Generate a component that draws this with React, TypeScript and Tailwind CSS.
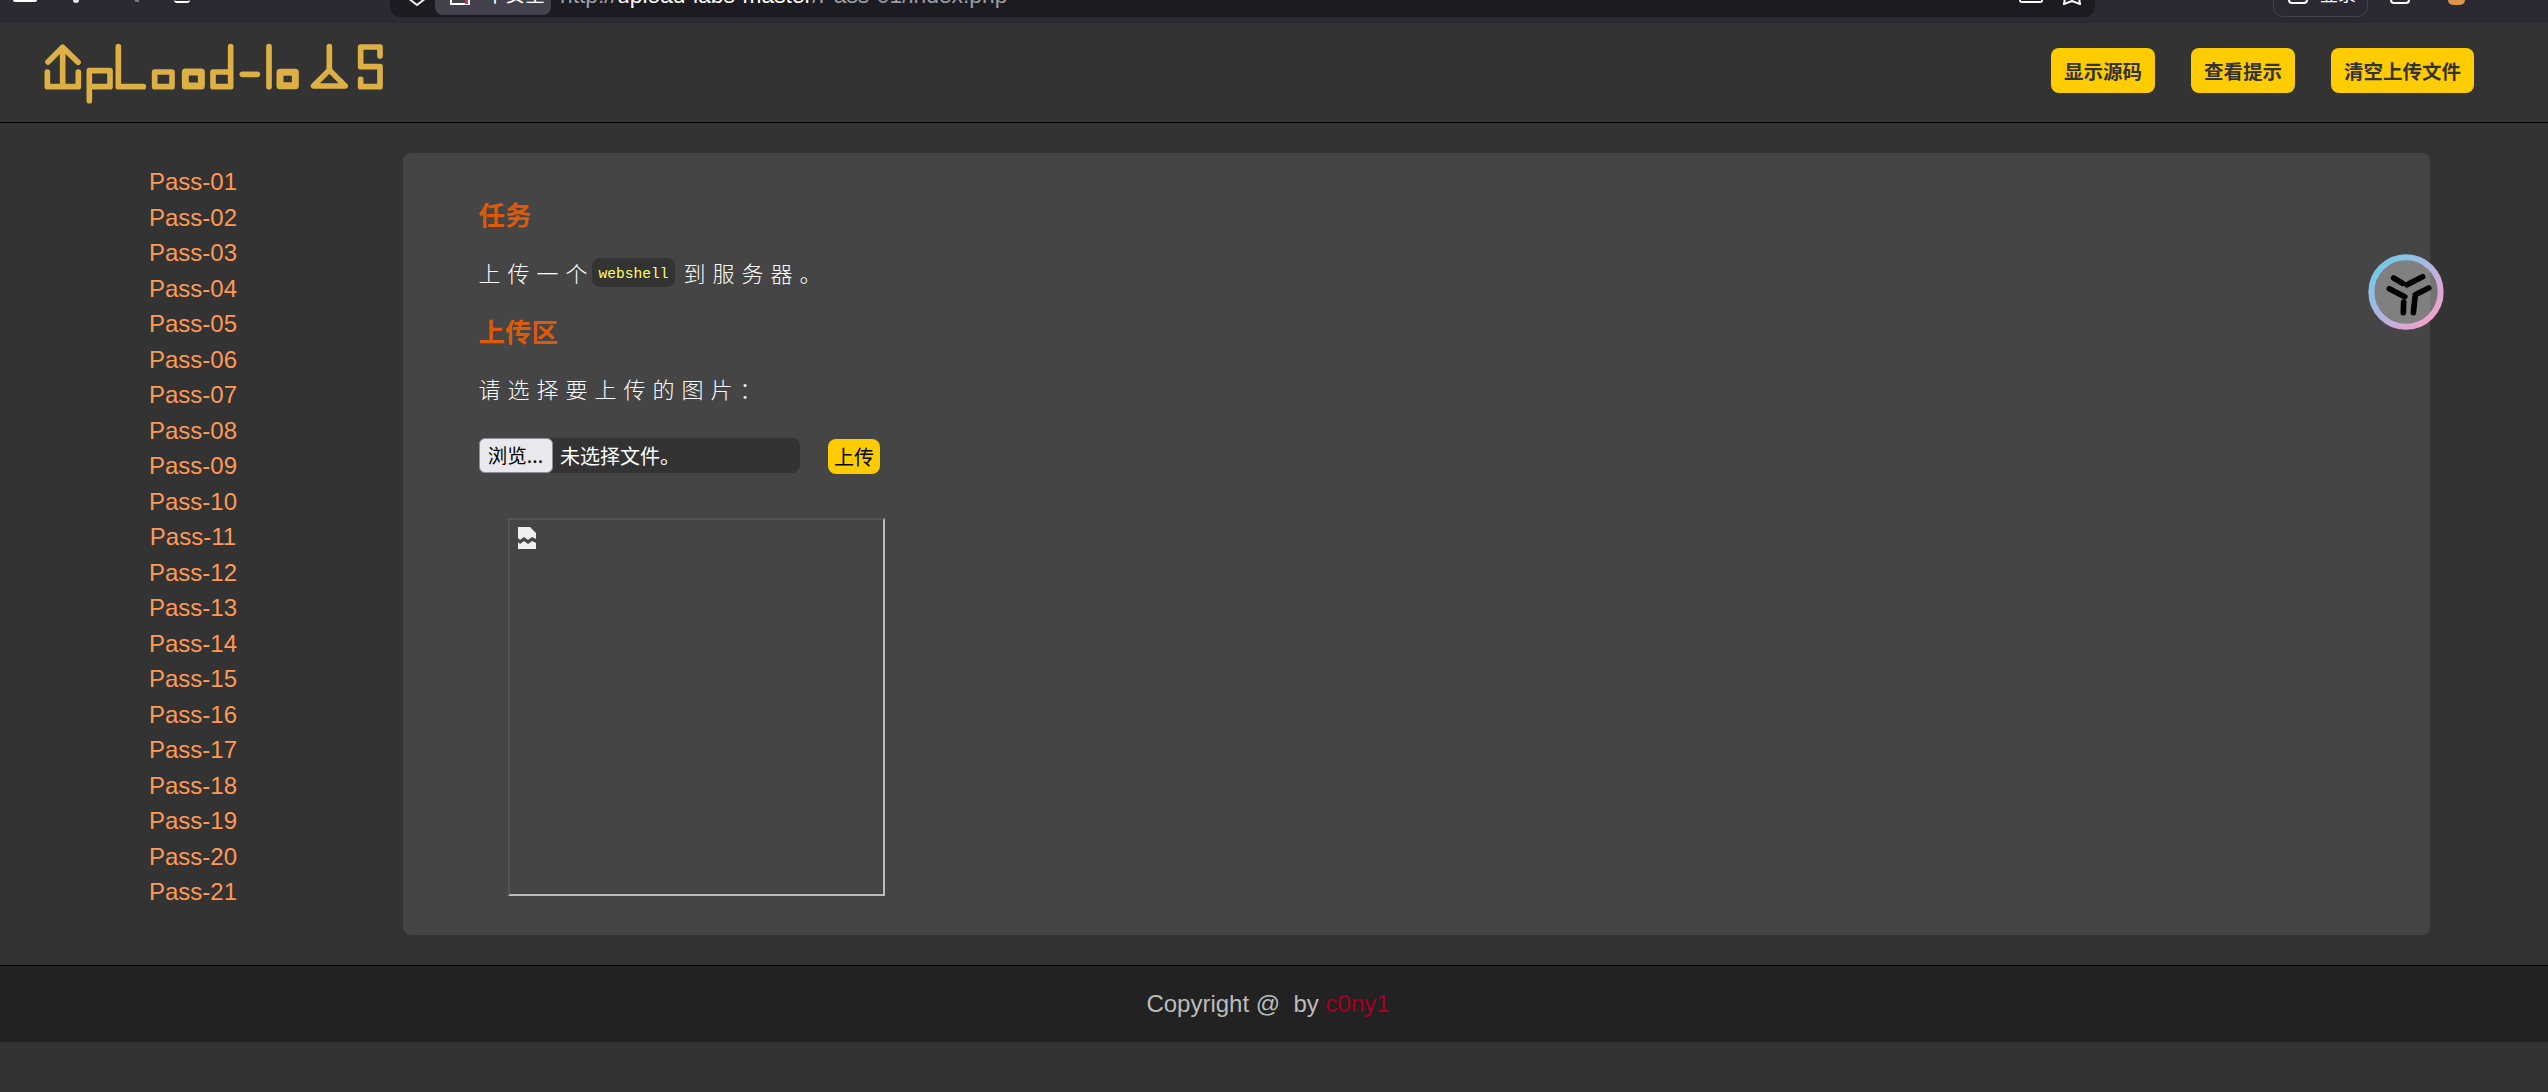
const passes = Array.from({ length: 21 }, (_, i) => `Pass-${String(i + 1).padStart(2, "0")}`);

function Logo() {
  return (
    <svg width="380" height="80" viewBox="0 0 1140 240" fill="none" stroke="#dcb044" strokeWidth="17" strokeLinejoin="round" strokeLinecap="round" className="ml-[20px] mt-[7px] shrink-0">
      <path d="M128 52V170M84 96L128 52L174 97M82 126V170H175V126" />
      <path d="M208 212V122H270V170H208" />
      <path d="M295 50V170H370" />
      <path d="M404 126H456V170H404Z" />
      <path d="M496 126H544V168H496Z" strokeWidth="21" />
      <path d="M632 50V170H579V126H632" />
      <path d="M667 133H712" />
      <path d="M747 50V170" />
      <path d="M780 127H826V167H780Z" strokeWidth="21" />
      <path d="M928 50V120" />
      <path d="M928 120L880 168H976Z" strokeWidth="16" />
      <path d="M1080 78V51H1022V110H1080V170H1022V148" />
    </svg>
  );
}

function Chrome() {
  return (
    <div className="flex h-[23px] items-start overflow-hidden bg-[#2b2a33] pl-[13px]">
      <div className="h-[2px] w-[24px] rounded-b-sm bg-white" />
      <div className="ml-[36px] h-[3px] w-[6px] rounded-b-sm bg-[#e8e8ea]" />
      <div className="ml-[56px] h-[2px] w-[4px] bg-[#77767e]" />
      <div className="ml-[35px] h-[3px] w-[16px] rounded-b-full border-b-2 border-white" />
      <div className="ml-[200px] flex h-[17px] w-[1705px] shrink-0 items-start rounded-b-[10px] bg-[#1c1b22]">
        <svg width="20" height="6" viewBox="0 0 20 6" fill="none" stroke="#f4f4f5" strokeWidth="2" className="ml-[17px]">
          <path d="M1 -2L10 5L19 -2" />
        </svg>
        <div className="ml-[8px] flex h-[15px] w-[116px] shrink-0 items-start overflow-hidden rounded-b-[8px] bg-[#42414d]">
          <div className="ml-[15px] h-[5px] w-[20px] border-x-2 border-b-2 border-white" />
          <div className="ml-[-5px] h-[4px] w-[3px] bg-[#e22850]" />
          <div className="ml-[17px] mt-[-19px] font-['Noto_Sans_CJK_SC',sans-serif] text-[20px] leading-[26px] text-white">不安全</div>
        </div>
        <div className="ml-[9px] mt-[-18px] whitespace-nowrap font-['Liberation_Sans',sans-serif] text-[22.8px] leading-[26px] text-[#9d9da2]">
          http://<span className="text-white">upload-labs-master</span>/Pass-01/index.php
        </div>
        <div className="ml-auto h-[3px] w-[24px] rounded-b-sm border-x-2 border-b-2 border-white" />
        <svg width="18" height="5" viewBox="0 0 18 5" fill="none" stroke="#fff" strokeWidth="2" className="ml-[20px] mr-[14px]">
          <path d="M2 -2L1 4L9 1L17 4L16 -2" />
        </svg>
      </div>
      <div className="ml-[178px] flex h-[17px] w-[95px] shrink-0 items-start overflow-hidden rounded-b-[10px] border-x border-b border-[#42414d]">
        <div className="ml-[14px] h-[4px] w-[20px] rounded-b-full border-x-2 border-b-2 border-white" />
        <div className="ml-[12px] mt-[-20px] font-['Noto_Sans_CJK_SC',sans-serif] text-[18px] leading-[26px] text-white">登录</div>
      </div>
      <div className="ml-[22px] h-[4px] w-[20px] rounded-b-sm border-x-2 border-b-2 border-white" />
      <div className="ml-[38px] h-[5px] w-[17px] rounded-b-full bg-[#d9954a]" />
    </div>
  );
}

function FloatBadge() {
  return (
    <svg width="80" height="80" viewBox="0 0 240 240" className="absolute left-[2366px] top-[252px]">
      <defs>
        <linearGradient id="ring" x1="0.1" y1="0.1" x2="0.9" y2="0.9">
          <stop offset="0" stopColor="#72cbe6" />
          <stop offset="0.5" stopColor="#b4b4e4" />
          <stop offset="1" stopColor="#f2a0c8" />
        </linearGradient>
      </defs>
      <circle cx="120" cy="120" r="104" fill="#ffffff" fillOpacity="0.32" stroke="url(#ring)" strokeWidth="18" />
      <g fill="none" stroke="#000" strokeWidth="17" strokeLinecap="round">
        <path d="M83 78L110 94M123 98L170 74" />
        <path d="M70 110L116 134M188 108L148 128" />
        <path d="M113 150L112 182M147 136L142 182" />
      </g>
    </svg>
  );
}

export default function App() {
  return (
    <div className="relative min-h-[1092px] bg-[#333333] font-['Liberation_Sans','Noto_Sans_CJK_SC',sans-serif]">
      <Chrome />
      <header className="flex h-[100px] items-start border-b-[1.5px] border-black">
        <Logo />
        <div className="ml-auto mr-[74px] mt-[25px] flex gap-[36px]">
          {["显示源码", "查看提示", "清空上传文件"].map((t) => (
            <button key={t} className="h-[45px] rounded-[8px] bg-[#ffcc00] px-[13px] font-['Noto_Sans_CJK_SC',sans-serif] text-[19.5px] font-bold leading-[45px] text-[#333333]">
              {t}
            </button>
          ))}
        </div>
      </header>
      <div className="mt-[30px] flex items-start">
        <nav className="w-[386px] shrink-0 pt-[11px] text-center">
          {passes.map((p) => (
            <div key={p} className="h-[35.5px] text-[24px] leading-[35.5px] text-[#ff9955]">{p}</div>
          ))}
        </nav>
        <main className="ml-[17px] h-[782px] w-[2027px] rounded-[8px] bg-[#454545] pl-[75.5px] pt-[43.5px] font-['Noto_Sans_CJK_SC',sans-serif]">
          <h2 className="h-[34px] text-[26.5px] font-bold leading-[34px] text-[#dd5a0c]">任务</h2>
          <p className="mt-[27px] flex h-[29px] items-center text-[22px] font-light leading-[27px] tracking-[7px] text-white">
            上传一个
            <code className="ml-[-2.5px] mr-[8.5px] h-[29px] w-[83px] rounded-[8px] bg-[#333333] text-center font-['Liberation_Mono',monospace] text-[14.6px] leading-[32px] tracking-normal text-[#ffff66]">webshell</code>
            到服务器。
          </p>
          <h2 className="mt-[27px] h-[34px] text-[26.5px] font-bold leading-[34px] text-[#dd5a0c]">上传区</h2>
          <p className="mt-[26.5px] h-[29px] text-[22px] font-light leading-[28px] tracking-[7px] text-white">请选择要上传的图片：</p>
          <div className="mt-[35px] flex items-start">
            <div className="flex h-[35px] w-[321px] items-center rounded-[8px] bg-[#333333] text-[20px] text-white">
              <div className="h-[35px] w-[74px] rounded-[6px] border-[1.5px] border-[#8f8f9d] bg-[#e9e9ed] text-center text-[19.5px] leading-[31px] text-black">浏览...</div>
              <span className="ml-[7.5px]">未选择文件。</span>
            </div>
            <button className="ml-[28.5px] mt-[1px] h-[35px] w-[52px] rounded-[8px] bg-[#ffcc00] text-center text-[20px] leading-[35px] text-black">上传</button>
          </div>
          <div className="ml-[29px] mt-[44px] h-[378px] w-[377.5px] border-[2px] border-b-[#bbbbbb] border-l-[#555555] border-r-[#bbbbbb] border-t-[#555555] pl-[7px] pt-[6px]">
            <svg width="20" height="24" viewBox="0 0 20 24" fill="#f0f0f0">
              <path d="M1 1H13L19 7V13L15 11L11 14L7 11L3 14L1 12Z" />
              <path d="M1 16L3 18L7 15L11 18L15 15L19 17V23H1Z" />
            </svg>
          </div>
        </main>
      </div>
      <footer className="mt-[30px] h-[77px] border-t-[1.5px] border-black bg-[#222222] pr-[12px] text-center text-[24px] leading-[76px] text-[#bbbbbb]">
        Copyright @&nbsp; by <span className="text-[#a50021]">c0ny1</span>
      </footer>
      <FloatBadge />
    </div>
  );
}
